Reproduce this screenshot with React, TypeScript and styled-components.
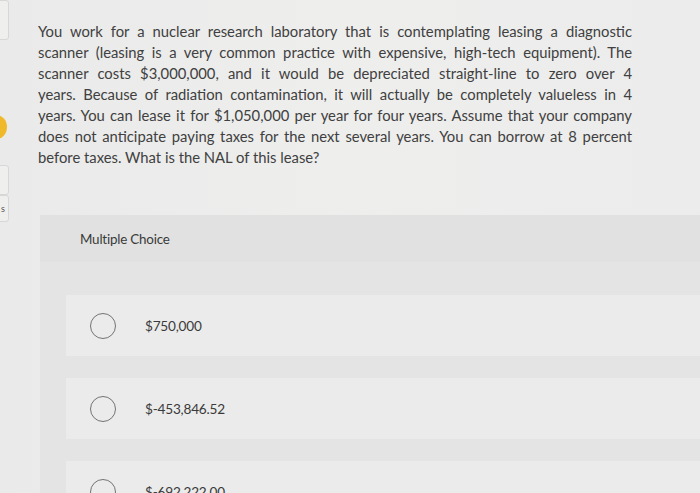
import styled, { createGlobalStyle } from 'styled-components'

const GlobalStyle = createGlobalStyle`
  html, body {
    margin: 0;
    padding: 0;
    background: #ebebea;
  }
  body {
    font-family: Lato, 'Open Sans', sans-serif;
    color: #3a3a3a;
  }
`

const Page = styled.div`
  display: flex;
  width: 700px;
  height: 493px;
  overflow: hidden;
  background: linear-gradient(90deg, #e9eae9 0%, #eeeeed 50%, #ebeceb 100%);
`

const Rail = styled.div`
  width: 12px;
  flex-shrink: 0;
  display: flex;
  flex-direction: column;
  overflow: hidden;
`

const RailBox = styled.div<{ $h: number; $top?: number }>`
  margin-left: -20px;
  margin-top: ${(p) => p.$top ?? 0}px;
  width: 29px;
  height: ${(p) => p.$h}px;
  border: 1px solid #d6d7d6;
  border-radius: 3px;
  background: #efefee;
  box-sizing: border-box;
  display: flex;
  align-items: center;
  justify-content: flex-end;
  padding-right: 3px;
  font-size: 9px;
  color: #555;
`

const Dot = styled.div`
  margin-left: -14px;
  margin-top: 75px;
  width: 21px;
  height: 24px;
  border-radius: 50%;
  background: #f0b92c;
`

const Main = styled.div`
  flex: 1;
  padding-left: 26px;
  padding-top: 21px;
  display: flex;
  flex-direction: column;
`

const Question = styled.div`
  width: 594px;
  font-size: 14.8px;
  line-height: 21px;
  color: #404040;
`

// each line of the question is set on its own so the breaks match the source
const Line = styled.span<{ $last?: boolean }>`
  display: block;
  white-space: nowrap;
  text-align: ${(p) => (p.$last ? 'left' : 'justify')};
  text-align-last: ${(p) => (p.$last ? 'left' : 'justify')};
`

const Panel = styled.section`
  margin-top: 47px;
  margin-left: 2px;
  background: #e3e4e3;
  display: flex;
  flex-direction: column;
  padding-bottom: 20px;
`

const PanelHeader = styled.div`
  height: 47px;
  display: flex;
  align-items: center;
  padding-left: 40px;
  font-size: 13.4px;
  color: #3a3a3a;
  background: #e0e1e0;
  letter-spacing: -0.2px;
`

const Options = styled.div`
  display: flex;
  flex-direction: column;
  gap: 22px;
  padding: 33px 0 0 26px;
`

const Option = styled.label`
  height: 61px;
  display: flex;
  align-items: center;
  padding-left: 24px;
  background: #eaebea;
  font-size: 13.6px;
  color: #3a3a3a;
  letter-spacing: -0.2px;
`

const Radio = styled.span`
  width: 26px;
  height: 26px;
  box-sizing: border-box;
  border: 1.6px solid #737373;
  border-radius: 50%;
  flex-shrink: 0;
  margin-right: 29px;
`

const lines = [
  'You work for a nuclear research laboratory that is contemplating leasing a diagnostic',
  'scanner (leasing is a very common practice with expensive, high-tech equipment). The',
  'scanner costs $3,000,000, and it would be depreciated straight-line to zero over 4',
  'years. Because of radiation contamination, it will actually be completely valueless in 4',
  'years. You can lease it for $1,050,000 per year for four years. Assume that your company',
  'does not anticipate paying taxes for the next several years. You can borrow at 8 percent',
  'before taxes. What is the NAL of this lease?',
]

const choices = ['$750,000', '$-453,846.52', '$-692,222.00']

export default function App() {
  return (
    <>
      <GlobalStyle />
      <Page>
        <Rail>
          <RailBox $h={40} />
          <Dot />
          <RailBox $h={30} $top={26} />
          <RailBox $h={27}>s</RailBox>
        </Rail>
        <Main>
          <Question>
            {lines.map((l, i) => (
              <Line key={i} $last={i === lines.length - 1}>
                {l}
              </Line>
            ))}
          </Question>
          <Panel>
            <PanelHeader>Multiple Choice</PanelHeader>
            <Options>
              {choices.map((c) => (
                <Option key={c}>
                  <Radio />
                  {c}
                </Option>
              ))}
            </Options>
          </Panel>
        </Main>
      </Page>
    </>
  )
}
